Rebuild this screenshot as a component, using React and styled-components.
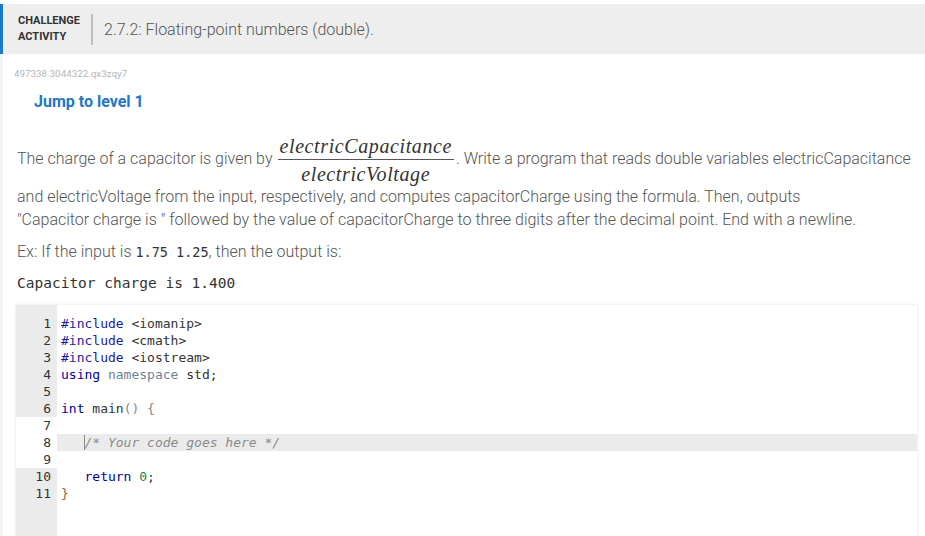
import React from 'react';
import styled, { createGlobalStyle } from 'styled-components';

const GlobalStyle = createGlobalStyle`
  body {
    margin: 0;
    background: #fff;
    font-family: Roboto, 'Liberation Sans', sans-serif;
  }
`;

const Page = styled.div`
  padding-top: 4px;
  width: 925px;
  height: 536px;
  overflow: hidden;
  box-sizing: border-box;
`;

const Header = styled.div`
  height: 50px;
  background: #eeeeee;
  border-left: 3px solid #1a7ac8;
  display: flex;
  align-items: center;
  padding-left: 15px;
`;

const Label = styled.div`
  font-size: 11px;
  font-weight: 700;
  line-height: 16px;
  color: #333;
  padding-right: 11px;
`;

const Divider = styled.div`
  width: 2px;
  height: 31px;
  background: #bdbdbd;
  margin-right: 11px;
`;

const Title = styled.h1`
  margin: 0;
  font-size: 16px;
  font-weight: 300;
  color: #555;
`;

const Content = styled.div`
  border-left: 3px solid #f3f3f3;
  padding: 14px 0 0 11px;
  height: 500px;
`;

const Id = styled.div`
  font-size: 9.8px;
  color: #b5b5b5;
  line-height: 12px;
`;

const JumpLink = styled.div`
  margin: 12px 0 0 20px;
  font-size: 16px;
  font-weight: 700;
  color: #2477c4;
  line-height: 20px;
`;

const Text = styled.p`
  margin: ${(p) => p.$margin || '0'};
  padding-left: 3px;
  font-size: 16px;
  font-weight: 300;
  color: #555;
  line-height: 23px;
`;

const NoWrap = styled.span`
  white-space: nowrap;
`;

const Frac = styled.span`
  display: inline-flex;
  flex-direction: column;
  align-items: center;
  vertical-align: middle;
  margin: -1px 2px -1px 5px;
  font-family: 'Liberation Serif', 'DejaVu Serif', serif;
  font-style: italic;
  font-weight: 400;
  font-size: 20px;
  letter-spacing: 0.6px;
  color: #333;
  line-height: 24px;
`;

const Num = styled.span`
  border-bottom: 1px solid #555;
  padding: 0 2px 1px;
`;

const Den = styled.span`
  padding: 2px 2px 0;
`;

const InlineCode = styled.code`
  font-family: 'DejaVu Sans Mono', 'Liberation Mono', monospace;
  font-size: 13.5px;
  color: #333;
`;

const Output = styled.pre`
  margin: 9px 0 0 3px;
  font-family: 'DejaVu Sans Mono', 'Liberation Mono', monospace;
  font-size: 14.5px;
  color: #333;
  line-height: 20px;
`;

const Editor = styled.div`
  margin: 12px 0 0 2px;
  width: 901px;
  height: 240px;
  box-shadow: 0 0 3px rgba(0, 0, 0, 0.12);
  display: grid;
  grid-template-columns: 41px 1fr;
  align-content: start;
  font-family: 'DejaVu Sans Mono', 'Liberation Mono', monospace;
  font-size: 13px;
  background: linear-gradient(to right, #ebebeb 41px, #fff 41px);
`;

const Gutter = styled.div`
  background: ${(p) => (p.$active ? '#fff' : '#ebebeb')};
  text-align: right;
  padding-right: 6px;
  color: #333;
  height: 17px;
  line-height: 17px;
  ${(p) => p.$first && 'margin-top: 10px;'}
`;

const Line = styled.div`
  height: 17px;
  line-height: 17px;
  padding-left: 4px;
  white-space: pre;
  color: #333;
  background: ${(p) => (p.$highlight ? '#ebebeb' : 'transparent')};
  ${(p) => p.$first && 'margin-top: 10px;'}
`;

const Cursor = styled.span`
  display: inline-block;
  width: 1px;
  height: 15px;
  background: #888;
  vertical-align: -3px;
  margin-right: -1px;
`;

const Kw = styled.span`
  color: ${(p) => p.$c};
  font-style: ${(p) => (p.$italic ? 'italic' : 'normal')};
`;

const KEY = '#0000a2';
const PRE = '#1c1c9c';

const code = [
  [<Kw $c={PRE}>#include</Kw>, ' <iomanip>'],
  [<Kw $c={PRE}>#include</Kw>, ' <cmath>'],
  [<Kw $c={PRE}>#include</Kw>, ' <iostream>'],
  [<Kw $c={KEY}>using</Kw>, ' ', <Kw $c="#6f7f9a">namespace</Kw>, ' std;'],
  [''],
  [<Kw $c={KEY}>int</Kw>, ' main', <Kw $c="#888">() {'{'}</Kw>],
  [''],
  ['   ', <Cursor />, <Kw $c="#8a8a8a" $italic>/* Your code goes here */</Kw>],
  [''],
  ['   ', <Kw $c={KEY}>return</Kw>, ' ', <Kw $c="#098658">0</Kw>, ';'],
  [<Kw $c="#8b6b3a">{'}'}</Kw>],
];

export default function App() {
  return (
    <Page>
      <GlobalStyle />
      <Header>
        <Label>
          CHALLENGE
          <br />
          ACTIVITY
        </Label>
        <Divider />
        <Title>2.7.2: Floating-point numbers (double).</Title>
      </Header>
      <Content>
        <Id>497338.3044322.qx3zqy7</Id>
        <JumpLink>Jump to level 1</JumpLink>
        <Text $margin="23px 0 0">
          The charge of a capacitor is given by
          <Frac>
            <Num>electricCapacitance</Num>
            <Den>electricVoltage</Den>
          </Frac>
          . Write a program that reads double variables electricCapacitance and electricVoltage
          from the input, respectively, and computes capacitorCharge using the formula. Then,
          outputs <NoWrap>"Capacitor charge is "</NoWrap> followed by the value of capacitorCharge
          to three digits after the decimal point. End with a newline.
        </Text>
        <Text $margin="9px 0 0">
          Ex: If the input is <InlineCode>1.75 1.25</InlineCode>, then the output is:
        </Text>
        <Output>Capacitor charge is 1.400</Output>
        <Editor>
          {code.map((parts, i) => {
            const n = i + 1;
            return (
              <React.Fragment key={n}>
                <Gutter $first={n === 1} $active={n >= 7 && n <= 9}>
                  {n}
                </Gutter>
                <Line $first={n === 1} $highlight={n === 8}>
                  {parts.map((p, j) => (
                    <React.Fragment key={j}>{p}</React.Fragment>
                  ))}
                </Line>
              </React.Fragment>
            );
          })}
        </Editor>
      </Content>
    </Page>
  );
}
